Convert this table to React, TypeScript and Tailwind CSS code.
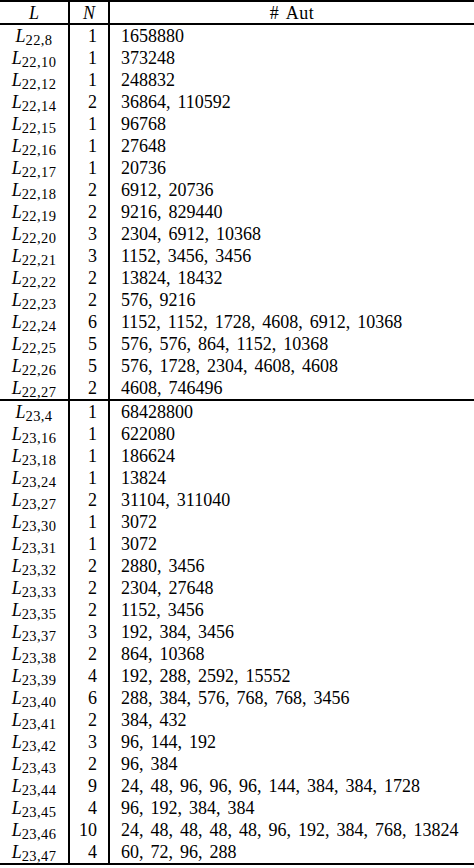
import React from "react";

type Row = [string, number, string];

const g22: Row[] = [
  ["22,8", 1, "1658880"],
  ["22,10", 1, "373248"],
  ["22,12", 1, "248832"],
  ["22,14", 2, "36864, 110592"],
  ["22,15", 1, "96768"],
  ["22,16", 1, "27648"],
  ["22,17", 1, "20736"],
  ["22,18", 2, "6912, 20736"],
  ["22,19", 2, "9216, 829440"],
  ["22,20", 3, "2304, 6912, 10368"],
  ["22,21", 3, "1152, 3456, 3456"],
  ["22,22", 2, "13824, 18432"],
  ["22,23", 2, "576, 9216"],
  ["22,24", 6, "1152, 1152, 1728, 4608, 6912, 10368"],
  ["22,25", 5, "576, 576, 864, 1152, 10368"],
  ["22,26", 5, "576, 1728, 2304, 4608, 4608"],
  ["22,27", 2, "4608, 746496"],
];

const g23: Row[] = [
  ["23,4", 1, "68428800"],
  ["23,16", 1, "622080"],
  ["23,18", 1, "186624"],
  ["23,24", 1, "13824"],
  ["23,27", 2, "31104, 311040"],
  ["23,30", 1, "3072"],
  ["23,31", 1, "3072"],
  ["23,32", 2, "2880, 3456"],
  ["23,33", 2, "2304, 27648"],
  ["23,35", 2, "1152, 3456"],
  ["23,37", 3, "192, 384, 3456"],
  ["23,38", 2, "864, 10368"],
  ["23,39", 4, "192, 288, 2592, 15552"],
  ["23,40", 6, "288, 384, 576, 768, 768, 3456"],
  ["23,41", 2, "384, 432"],
  ["23,42", 3, "96, 144, 192"],
  ["23,43", 2, "96, 384"],
  ["23,44", 9, "24, 48, 96, 96, 96, 144, 384, 384, 1728"],
  ["23,45", 4, "96, 192, 384, 384"],
  ["23,46", 10, "24, 48, 48, 48, 48, 96, 192, 384, 768, 13824"],
  ["23,47", 4, "60, 72, 96, 288"],
];

function TableRow({ r }: { r: Row }) {
  return (
    <div className="flex h-[22px]">
      <div className="w-[70px] shrink-0 border-r-2 border-black flex items-center justify-center leading-none">
        <span className="italic">L</span>
        <span className="text-[14.5px] tracking-[0.4px] relative top-[4px] leading-none">{r[0]}</span>
      </div>
      <div className="w-[40px] shrink-0 border-r-2 border-black flex items-center justify-end pr-[11px] leading-none">
        {r[1]}
      </div>
      <div className="flex-1 flex items-center pl-[11px] leading-none whitespace-nowrap [word-spacing:2.5px]">
        {r[2]}
      </div>
    </div>
  );
}

export default function App() {
  return (
    <div
      className="w-[474px] h-[868px] bg-white text-black text-[18px] overflow-hidden"
      style={{ fontFamily: '"Liberation Serif", "Times New Roman", serif' }}
    >
      <div className="border-t-2 border-b-2 border-black flex h-[25px]">
        <div className="w-[70px] shrink-0 border-r-2 border-black flex items-center justify-center leading-none italic">
          L
        </div>
        <div className="w-[40px] shrink-0 border-r-2 border-black flex items-center justify-center leading-none italic">
          N
        </div>
        <div className="flex-1 flex items-center justify-center leading-none">
          <span>#</span>
          <span className="ml-[7px] tracking-[0.5px]">Aut</span>
        </div>
      </div>
      <div className="border-b-2 border-black">
        {g22.map((r) => (
          <TableRow key={r[0]} r={r} />
        ))}
      </div>
      <div className="border-b-2 border-black">
        {g23.map((r) => (
          <TableRow key={r[0]} r={r} />
        ))}
      </div>
    </div>
  );
}
